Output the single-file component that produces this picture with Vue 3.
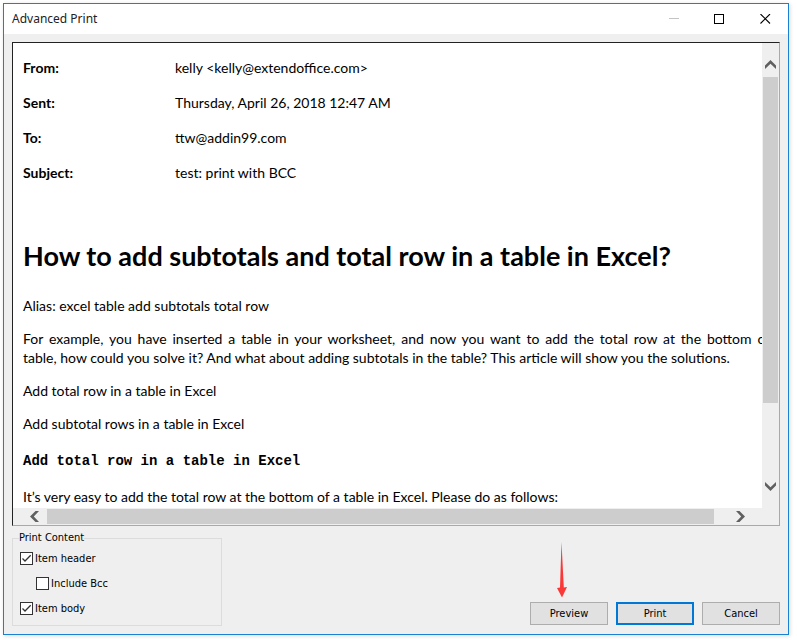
<script setup>
import { ref } from 'vue'

const fields = [
  { label: 'From:', value: 'kelly <kelly@extendoffice.com>' },
  { label: 'Sent:', value: 'Thursday, April 26, 2018 12:47 AM' },
  { label: 'To:', value: 'ttw@addin99.com' },
  { label: 'Subject:', value: 'test: print with BCC' },
]

const options = ref([
  { id: 'item-header', label: 'Item header', checked: true, nested: false },
  { id: 'include-bcc', label: 'Include Bcc', checked: false, nested: true },
  { id: 'item-body', label: 'Item body', checked: true, nested: false },
])
</script>

<template>
  <div class="screen">
    <main class="window">
      <header class="titlebar">
        <span class="title">Advanced Print</span>
        <div class="controls">
          <button type="button" aria-label="Minimize" disabled>
            <svg width="11" height="11" viewBox="0 0 11 11" shape-rendering="crispEdges"><path d="M1 4.500h10" stroke="#c4c4c4" fill="none" /></svg>
          </button>
          <button type="button" aria-label="Maximize">
            <svg width="11" height="11" viewBox="0 0 11 11" shape-rendering="crispEdges"><path d="M.5.5h9v9h-9z" stroke="#000" fill="none" /></svg>
          </button>
          <button type="button" aria-label="Close">
            <svg width="11" height="11" viewBox="0 0 11 11"><path d="M.5 0l9.500 9.500M10 0L.5 9.500" stroke="#000" stroke-width="1.100" fill="none" /></svg>
          </button>
        </div>
      </header>

      <div class="body">
        <section class="viewer">
          <div class="viewport">
            <article class="document">
              <dl class="fields">
                <template v-for="field in fields" :key="field.label">
                  <dt>{{ field.label }}</dt>
                  <dd>{{ field.value }}</dd>
                </template>
              </dl>
              <h1>How to add subtotals and total row in a table in Excel?</h1>
              <p>Alias: excel table add subtotals total row</p>
              <p>
                <span class="justified">For example, you have inserted a table in your worksheet, and now you want to add the total row at the bottom of the</span>
                table, how could you solve it? And what about adding subtotals in the table? This article will show you the solutions.
              </p>
              <p>Add total row in a table in Excel</p>
              <p>Add subtotal rows in a table in Excel</p>
              <h2>Add total row in a table in Excel</h2>
              <p>It’s very easy to add the total row at the bottom of a table in Excel. Please do as follows:</p>
            </article>
          </div>
          <div class="scroll vertical">
            <svg width="11" height="9" viewBox="0 0 11 9"><path d="M0 9V5.500L5.500 0 11 5.500V9L5.500 3.800z" fill="#606060" /></svg>
            <div class="track"><div class="thumb"></div></div>
            <svg width="11" height="9" viewBox="0 0 11 9"><path d="M0 0V3.500L5.500 9 11 3.500V0L5.500 5.200z" fill="#606060" /></svg>
          </div>
          <div class="scroll horizontal">
            <svg width="9" height="11" viewBox="0 0 9 11"><path d="M9 0H5.500L0 5.500 5.500 11H9L3.800 5.500z" fill="#606060" /></svg>
            <div class="track"><div class="thumb"></div></div>
            <svg width="9" height="11" viewBox="0 0 9 11"><path d="M0 0H3.500L9 5.500 3.500 11H0L5.200 5.500z" fill="#606060" /></svg>
          </div>
        </section>

        <footer class="footer">
          <fieldset class="content-options">
            <legend>Print Content</legend>
            <label v-for="option in options" :key="option.id" :for="option.id" class="option" :class="{ nested: option.nested }">
              <span class="box">
                <input :id="option.id" v-model="option.checked" type="checkbox" />
                <svg v-if="option.checked" width="13" height="13" viewBox="0 0 13 13"><path d="M2.500 6.500L5 9l5.700-5.700" stroke="#333" stroke-width="1.300" fill="none" /></svg>
              </span>
              {{ option.label }}
            </label>
          </fieldset>
          <div class="actions">
            <div class="pointed">
              <svg class="arrow" width="12" height="56" viewBox="0 0 12 56"><path d="M5.500 0L7.800 45.500 11 45 6 55.500 1 46l3-.5z" fill="#fb3838" /></svg>
              <button type="button">Preview</button>
            </div>
            <button type="submit" class="primary">Print</button>
            <button type="button">Cancel</button>
          </div>
        </footer>
      </div>
    </main>
  </div>
</template>

<style>
body {
  background: #fff;
}
</style>

<style scoped>
.screen {
  box-sizing: border-box;
  display: flex;
  height: 100vh;
  padding: 3px 8px 5px 3px;
}

.window {
  display: flex;
  flex: 1;
  flex-direction: column;
  min-width: 0;
  border: 1px solid #1a80d2;
  background: #efefef;
  box-shadow: 1px 1px 4px rgba(0, 0, 0, 0.15);
  color: #000;
  font: 12px/16px "Noto Sans", sans-serif;
}

.titlebar {
  display: flex;
  align-items: center;
  justify-content: space-between;
  height: 30px;
  padding-left: 8px;
  background: #fff;
}

.title {
  color: #222;
}

.controls {
  display: flex;
}

.controls button {
  display: grid;
  place-items: center;
  width: 46px;
  height: 30px;
  padding: 0;
  border: 0;
  background: none;
}

.body {
  display: flex;
  flex: 1;
  flex-direction: column;
  min-height: 0;
  padding: 8px;
}

.viewer {
  display: grid;
  flex: 1;
  grid-template: minmax(0, 1fr) 17px / minmax(0, 1fr) 17px;
  min-height: 0;
  border: 1px solid;
  border-color: #222 #a9a9a9 #a9a9a9 #222;
  background: #efefef;
}

.viewport {
  overflow: hidden;
  background: #fff;
}

.document {
  width: 773px;
  padding: 7px 10px;
  box-sizing: content-box;
  font: 14px/19px Lato, sans-serif;
}

.fields {
  display: grid;
  grid-template-columns: 152px 1fr;
  margin: 0;
  line-height: 35px;
}

.fields dt {
  font-weight: 700;
}

.fields dd {
  margin: 0;
}

h1 {
  margin: 48px 0 22px;
  font-size: 27px;
  line-height: 36px;
}

p {
  margin: 0 0 14px;
}

.justified {
  display: block;
  text-align: justify;
  text-align-last: justify;
}

h2 {
  margin: 19px 0 16px;
  font: 700 14px/19px "Liberation Mono", monospace;
}

.scroll {
  display: flex;
  align-items: center;
}

.track {
  flex: 1;
}

.thumb {
  background: #cdcdcd;
}

.vertical {
  flex-direction: column;
  padding: 17px 0;
  gap: 8px;
}

.vertical .track {
  width: 15px;
}

.vertical .thumb {
  height: 82%;
}

.horizontal {
  padding: 0 17px;
  gap: 8px;
}

.horizontal .thumb {
  width: 98%;
  height: 15px;
}

.footer {
  display: flex;
  align-items: flex-end;
  justify-content: space-between;
  padding-top: 4px;
  font: 11px/16px "DejaVu Sans Condensed", "Open Sans", sans-serif;
}

.content-options {
  box-sizing: border-box;
  width: 210px;
  margin: 0;
  padding: 0 7px 4px;
  border: 1px solid #dcdcdc;
}

.content-options legend {
  padding: 0;
  margin-left: -1px;
}

.option {
  display: flex;
  align-items: center;
  gap: 2px;
  height: 25px;
}

.nested {
  padding-left: 16px;
}

.box {
  display: grid;
}

.box > * {
  grid-area: 1 / 1;
}

.box input {
  appearance: none;
  box-sizing: border-box;
  width: 13px;
  height: 13px;
  margin: 0;
  border: 1px solid #333;
  background: #fff;
}

.box svg {
  pointer-events: none;
}

.actions {
  display: flex;
  gap: 8px;
  padding-bottom: 1px;
}

.actions button {
  box-sizing: border-box;
  width: 78px;
  height: 23px;
  padding: 0;
  border: 1px solid #adadad;
  background: #e1e1e1;
  color: #000;
  font: inherit;
}

.actions .primary {
  border: 2px solid #0078d7;
}

.pointed {
  position: relative;
  display: flex;
}

.arrow {
  position: absolute;
  bottom: 27px;
  left: 26px;
}
</style>
